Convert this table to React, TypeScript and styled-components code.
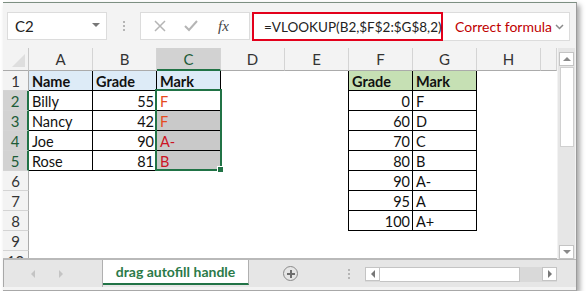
import { FC } from 'react';
import styled, { createGlobalStyle, css } from 'styled-components';

const GlobalStyle = createGlobalStyle`
  html, body {
    margin: 0;
    padding: 0;
    background: #ffffff;
  }
  body {
    font-family: Lato, "Liberation Sans", sans-serif;
  }
`;

const GREEN = '#217346';
const FONT = 'Lato, "Liberation Sans", sans-serif';

const Window = styled.div`
  margin: 2px 0 0 3px;
  width: 573px;
  height: 287px;
  background: #f3f3f3;
  border-top: 1px solid #7d8f82;
  border-right: 1px solid #9c9c9c;
  border-bottom: 1px solid #a8a8a8;
  box-shadow: 3px 3px 5px rgba(0, 0, 0, 0.35);
  display: flex;
  flex-direction: column;
  font-family: ${FONT};
`;

const FormulaBar = styled.div`
  height: 45px;
  display: flex;
  align-items: flex-start;
  padding: 9px 6px 0 4px;
  box-sizing: border-box;
`;

const NameBox = styled.div`
  width: 100px;
  height: 28px;
  box-sizing: border-box;
  background: #fff;
  border: 1px solid #dcdcdc;
  display: flex;
  align-items: center;
  justify-content: space-between;
  padding: 0 6px 0 7px;
  font-size: 15px;
  color: #222;
`;

const DropTri = styled.span`
  width: 0;
  height: 0;
  border-left: 4px solid transparent;
  border-right: 4px solid transparent;
  border-top: 4px solid #777;
  margin-bottom: 2px;
`;

const Grip = styled.div`
  width: 33px;
  height: 28px;
  display: flex;
  flex-direction: column;
  align-items: center;
  justify-content: center;
  gap: 2px;

  span {
    width: 2px;
    height: 2px;
    background: #b5b5b5;
  }
`;

const FxBox = styled.div`
  width: 110px;
  height: 28px;
  box-sizing: border-box;
  background: #fff;
  border: 1px solid #dcdcdc;
  display: flex;
  align-items: center;
  padding: 0 0 0 13px;
  gap: 18px;
  color: #b8b8b8;
`;

const Fx = styled.span`
  font-family: "Liberation Serif", serif;
  font-style: italic;
  font-size: 15px;
  color: #444;
  margin-left: 2px;
`;

const FormulaInput = styled.div`
  flex: 1;
  margin-left: 2px;
  height: 29px;
  box-sizing: border-box;
  background: #fff;
  border: 1px solid #dcdcdc;
  border-left: none;
  display: flex;
  align-items: center;
`;

const Highlight = styled.div`
  width: 191px;
  height: 29px;
  box-sizing: border-box;
  border: 2px solid #e3001b;
  display: flex;
  align-items: center;
  padding-left: 10px;
  font-size: 13.5px;
  color: #222;
  white-space: nowrap;
`;

const Note = styled.div`
  flex: 1;
  display: flex;
  align-items: center;
  justify-content: space-between;
  padding: 0 5px 0 12px;
  font-size: 14px;
  color: #c00000;
  white-space: nowrap;
`;

const Body = styled.div`
  display: flex;
  gap: 1px;
  height: 211px;
`;

const Sheet = styled.div`
  position: relative;
  width: 554px;
  height: 211px;
  overflow: hidden;
  background: #fff;
  border-bottom: 1px solid #b9b9b9;
  box-sizing: border-box;
  display: grid;
  grid-template-columns: 26px repeat(8, 64px) 16px;
  grid-template-rows: 23px repeat(10, 20px);
  align-content: start;
  font-size: 14.5px;
`;

const Corner = styled.div`
  background: #f3f3f3;
  border-right: 1px solid #c8c8c8;
  border-bottom: 1px solid #ababab;
  box-sizing: border-box;
  position: relative;

  &::after {
    content: '';
    position: absolute;
    right: 3px;
    bottom: 3px;
    border-left: 13px solid transparent;
    border-bottom: 13px solid #dedede;
  }
`;

const ColHead = styled.div<{ $sel?: boolean }>`
  background: ${(p) => (p.$sel ? '#d2d2d2' : '#f3f3f3')};
  border-right: 1px solid #d4d4d4;
  border-bottom: ${(p) => (p.$sel ? `2px solid ${GREEN}` : '1px solid #ababab')};
  box-sizing: border-box;
  display: flex;
  align-items: center;
  justify-content: center;
  color: ${(p) => (p.$sel ? '#1d5c37' : '#333')};
  font-size: 15px;
`;

const RowHead = styled.div<{ $sel?: boolean }>`
  background: ${(p) => (p.$sel ? '#d2d2d2' : '#f3f3f3')};
  border-right: ${(p) => (p.$sel ? `2px solid ${GREEN}` : '1px solid #ababab')};
  border-bottom: 1px solid #d4d4d4;
  box-sizing: border-box;
  display: flex;
  align-items: center;
  justify-content: center;
  color: ${(p) => (p.$sel ? '#1d5c37' : '#333')};
  font-size: 15px;
`;

const Cell = styled.div<{
  $bg?: string;
  $bold?: boolean;
  $num?: boolean;
  $color?: string;
  $r?: boolean;
  $b?: boolean;
}>`
  background: ${(p) => p.$bg || '#fff'};
  font-weight: ${(p) => (p.$bold ? 700 : 400)};
  color: ${(p) => p.$color || '#111'};
  display: flex;
  align-items: center;
  justify-content: ${(p) => (p.$num ? 'flex-end' : 'flex-start')};
  padding: 0 3px 0 3px;
  box-sizing: border-box;
  white-space: nowrap;
  overflow: hidden;
  ${(p) =>
    (p.$r || p.$b) &&
    css`
      box-shadow: ${[p.$r && 'inset -1px 0 0 #000', p.$b && 'inset 0 -1px 0 #000']
        .filter(Boolean)
        .join(', ')};
    `}
`;

const Selection = styled.div`
  position: absolute;
  left: 152px;
  top: 41px;
  width: 67px;
  height: 82px;
  box-sizing: border-box;
  border: 2px solid ${GREEN};
  pointer-events: none;

  &::after {
    content: '';
    position: absolute;
    right: -4px;
    bottom: -4px;
    width: 5px;
    height: 5px;
    background: ${GREEN};
    border: 1px solid #fff;
  }
`;

const VScroll = styled.div`
  width: 17px;
  height: 211px;
  background: #e6e6e6;
  display: flex;
  flex-direction: column;
  align-items: center;
  padding-top: 4px;
  box-sizing: border-box;
`;

const ArrowBox = styled.div`
  width: 15px;
  height: 14px;
  box-sizing: border-box;
  background: #fff;
  border: 1px solid #c4c4c4;
  display: flex;
  align-items: center;
  justify-content: center;
  flex-shrink: 0;
`;

const Tri = styled.span<{ $dir: 'up' | 'down' | 'left' | 'right'; $c?: string }>`
  width: 0;
  height: 0;
  ${(p) => {
    const c = p.$c || '#8a8a8a';
    if (p.$dir === 'up')
      return `border-left: 4px solid transparent; border-right: 4px solid transparent; border-bottom: 4px solid ${c};`;
    if (p.$dir === 'down')
      return `border-left: 4px solid transparent; border-right: 4px solid transparent; border-top: 4px solid ${c};`;
    if (p.$dir === 'left')
      return `border-top: 4px solid transparent; border-bottom: 4px solid transparent; border-right: 4px solid ${c};`;
    return `border-top: 4px solid transparent; border-bottom: 4px solid transparent; border-left: 4px solid ${c};`;
  }}
`;

const VThumb = styled.div`
  width: 14px;
  height: 80px;
  margin-top: 1px;
  background: #fff;
  border: 1px solid #d0d0d0;
  box-sizing: border-box;
`;

const Spacer = styled.div`
  flex: 1;
`;

const TabBar = styled.div`
  height: 28px;
  display: flex;
  align-items: stretch;
  background: #e6e6e6;
  border-top: 1px solid #b9b9b9;
  border-left: 1px solid #a8a8a8;
  box-sizing: border-box;
`;

const Nav = styled.div`
  width: 99px;
  box-sizing: border-box;
  display: flex;
  align-items: center;
  padding-left: 27px;
  gap: 24px;
  border-right: 1px solid #b0b0b0;
`;

const Tab = styled.div`
  width: 146px;
  background: #fff;
  border-bottom: 2px solid ${GREEN};
  border-right: 1px solid #b0b0b0;
  box-sizing: border-box;
  display: flex;
  align-items: center;
  justify-content: center;
  font-weight: 700;
  font-size: 14px;
  color: #2b7a48;
  margin-bottom: 2px;
`;

const AddBtn = styled.div`
  width: 15px;
  height: 15px;
  border-radius: 50%;
  border: 1px solid #8a8a8a;
  box-sizing: border-box;
  align-self: center;
  margin-left: 34px;
  position: relative;

  &::before,
  &::after {
    content: '';
    position: absolute;
    background: #6e6e6e;
    left: 50%;
    top: 50%;
    transform: translate(-50%, -50%);
  }
  &::before {
    width: 8px;
    height: 2px;
  }
  &::after {
    width: 2px;
    height: 8px;
  }
`;

const HGrip = styled(Grip)`
  width: auto;
  height: auto;
  align-self: center;
  margin-left: 50px;
  margin-right: 15px;
`;

const HScroll = styled.div`
  width: 192px;
  height: 15px;
  align-self: center;
  margin-top: 1px;
  display: flex;
  background: #d9d9d9;
`;

const HThumb = styled.div`
  width: 140px;
  height: 15px;
  background: #fff;
  border: 1px solid #c4c4c4;
  border-left: none;
  box-sizing: border-box;
`;

type CellDef = {
  t?: string;
  bg?: string;
  bold?: boolean;
  num?: boolean;
  color?: string;
  r?: boolean;
  b?: boolean;
};

const BLUE = '#ddebf7';
const LGREEN = '#c6e0b4';
const GRAY = '#c9c9c9';
const RED = '#cc1424';
const ORANGE = '#e64b1e';

const lookup: [string, string][] = [
  ['0', 'F'],
  ['60', 'D'],
  ['70', 'C'],
  ['80', 'B'],
  ['90', 'A-'],
  ['95', 'A'],
  ['100', 'A+'],
];

const students: [string, string, string, string][] = [
  ['Billy', '55', 'F', ORANGE],
  ['Nancy', '42', 'F', ORANGE],
  ['Joe', '90', 'A-', RED],
  ['Rose', '81', 'B', RED],
];

// nine cells per row: columns A..I
const buildRow = (row: number): CellDef[] => {
  const cells: CellDef[] = Array.from({ length: 9 }, () => ({}));
  if (row === 1) {
    cells[0] = { t: 'Name', bg: BLUE, bold: true, r: true, b: true };
    cells[1] = { t: 'Grade', bg: BLUE, bold: true, r: true, b: true };
    cells[2] = { t: 'Mark', bg: BLUE, bold: true, r: true, b: true };
  } else if (row <= 5) {
    const [n, g, m, c] = students[row - 2];
    cells[0] = { t: n, r: true, b: true };
    cells[1] = { t: g, num: true, r: true, b: true };
    cells[2] = { t: m, color: c, bg: row > 2 ? GRAY : undefined, b: row < 5 };
  }
  if (row <= 8) {
    cells[4] = { r: true };
    if (row === 1) {
      cells[5] = { t: 'Grade', bg: LGREEN, bold: true, r: true, b: true };
      cells[6] = { t: 'Mark', bg: LGREEN, bold: true, r: true, b: true };
    } else {
      const [g, m] = lookup[row - 2];
      cells[5] = { t: g, num: true, r: true, b: true };
      cells[6] = { t: m, r: true, b: true };
    }
  }
  return cells;
};

const cols = ['A', 'B', 'C', 'D', 'E', 'F', 'G', 'H', ''];

const App: FC = () => {
  const rows = Array.from({ length: 10 }, (_, i) => i + 1);

  return (
    <>
      <GlobalStyle />
      <Window>
        <FormulaBar>
          <NameBox>
            C2
            <DropTri />
          </NameBox>
          <Grip>
            <span />
            <span />
            <span />
          </Grip>
          <FxBox>
            <svg width="12" height="12" viewBox="0 0 12 12">
              <path d="M1 1L11 11M11 1L1 11" stroke="#b5b5b5" strokeWidth="1.5" />
            </svg>
            <svg width="14" height="12" viewBox="0 0 14 12">
              <path d="M1 6L5 10L13 1" stroke="#b5b5b5" strokeWidth="2" fill="none" />
            </svg>
            <Fx>fx</Fx>
          </FxBox>
          <FormulaInput>
            <Highlight>=VLOOKUP(B2,$F$2:$G$8,2)</Highlight>
            <Note>
              Correct formula
              <svg width="9" height="6" viewBox="0 0 9 6">
                <path d="M1 1L4.5 4.5L8 1" stroke="#8a8a8a" strokeWidth="1.5" fill="none" />
              </svg>
            </Note>
          </FormulaInput>
        </FormulaBar>

        <Body>
          <Sheet>
            <Corner />
            {cols.map((c, i) => (
              <ColHead key={i} $sel={c === 'C'}>
                {c}
              </ColHead>
            ))}
            {rows.map((r) => [
              <RowHead key={`h${r}`} $sel={r >= 2 && r <= 5}>
                {r}
              </RowHead>,
              ...buildRow(r).map((c, i) => (
                <Cell
                  key={`${r}-${i}`}
                  $bg={c.bg}
                  $bold={c.bold}
                  $num={c.num}
                  $color={c.color}
                  $r={c.r}
                  $b={c.b}
                >
                  {c.t}
                </Cell>
              )),
            ])}
            <Selection />
          </Sheet>
          <VScroll>
            <ArrowBox>
              <Tri $dir="up" />
            </ArrowBox>
            <VThumb />
            <Spacer />
            <ArrowBox>
              <Tri $dir="down" />
            </ArrowBox>
          </VScroll>
        </Body>

        <TabBar>
          <Nav>
            <Tri $dir="left" $c="#c4c4c4" />
            <Tri $dir="right" $c="#c4c4c4" />
          </Nav>
          <Tab>drag autofill handle</Tab>
          <AddBtn />
          <HGrip>
            <span />
            <span />
            <span />
          </HGrip>
          <HScroll>
            <ArrowBox>
              <Tri $dir="left" $c="#777" />
            </ArrowBox>
            <HThumb />
            <Spacer />
            <ArrowBox>
              <Tri $dir="right" $c="#777" />
            </ArrowBox>
          </HScroll>
        </TabBar>
      </Window>
    </>
  );
};

export default App;
